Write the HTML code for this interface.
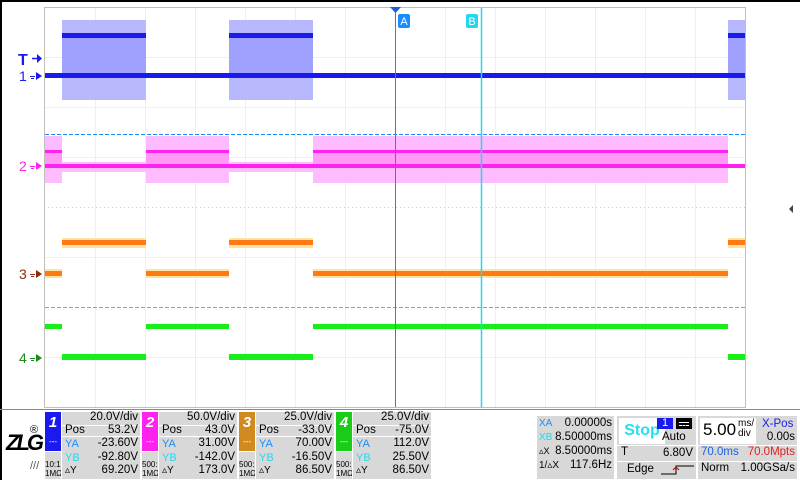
<!DOCTYPE html>
<html><head><meta charset="utf-8"><style>
body{margin:0;width:800px;height:480px;overflow:hidden;background:#fff;font-family:"Liberation Sans",sans-serif;position:relative}
.a{position:absolute}
.g{background:#d8d8d8}
.t{font-size:11.5px;color:#000;white-space:nowrap}
</style></head><body>
<div class="a" style="left:0;top:0;width:800px;height:2px;background:#000"></div>
<div class="a" style="left:0;top:0;width:2px;height:480px;background:#000"></div>
<svg class="a" style="left:0;top:0" width="800" height="410">
<g stroke="#efefef" stroke-width="1">
<line x1="95.5" y1="7" x2="95.5" y2="407"/><line x1="145.5" y1="7" x2="145.5" y2="407"/><line x1="195.5" y1="7" x2="195.5" y2="407"/><line x1="245.5" y1="7" x2="245.5" y2="407"/><line x1="295.5" y1="7" x2="295.5" y2="407"/><line x1="345.5" y1="7" x2="345.5" y2="407"/><line x1="445.5" y1="7" x2="445.5" y2="407"/><line x1="495.5" y1="7" x2="495.5" y2="407"/><line x1="545.5" y1="7" x2="545.5" y2="407"/><line x1="595.5" y1="7" x2="595.5" y2="407"/><line x1="645.5" y1="7" x2="645.5" y2="407"/><line x1="695.5" y1="7" x2="695.5" y2="407"/>
<line x1="44" y1="57.5" x2="745" y2="57.5"/><line x1="44" y1="107.5" x2="745" y2="107.5"/><line x1="44" y1="157.5" x2="745" y2="157.5"/><line x1="44" y1="257.5" x2="745" y2="257.5"/><line x1="44" y1="357.5" x2="745" y2="357.5"/>
</g>
<line x1="44" y1="207.5" x2="745" y2="207.5" stroke="#ccc" stroke-dasharray="1,3"/>
<line x1="44" y1="7.5" x2="746" y2="7.5" stroke="#c0c0b8"/>
<line x1="44.5" y1="7" x2="44.5" y2="408" stroke="#c0c0b8"/>
<line x1="745.5" y1="7" x2="745.5" y2="408" stroke="#c0c0b8"/>
<line x1="44" y1="407.5" x2="746" y2="407.5" stroke="#c0c0b8"/>
<!-- ch1 -->
<g fill="#b8b8ff"><rect x="62" y="20" width="84" height="80"/><rect x="229" y="20" width="84" height="80"/><rect x="728" y="20" width="17" height="80"/></g>
<g fill="#a0a0ff"><rect x="62" y="37" width="84" height="40"/><rect x="229" y="37" width="84" height="40"/><rect x="728" y="37" width="17" height="40"/></g>
<g fill="#1a1aee"><rect x="45" y="73" width="700" height="5"/><rect x="62" y="33" width="84" height="5"/><rect x="229" y="33" width="84" height="5"/><rect x="728" y="33" width="17" height="5"/></g>
<!-- ch2 -->
<line x1="45" y1="134.5" x2="745" y2="134.5" stroke="#1a8cff" stroke-dasharray="4,2"/>
<g fill="#ffbbff"><rect x="45" y="136" width="17" height="47"/><rect x="146" y="136" width="83" height="47"/><rect x="313" y="136" width="415" height="47"/></g>
<rect x="62" y="162" width="84" height="10" fill="#ffbbff"/><rect x="229" y="162" width="84" height="10" fill="#ffbbff"/>
<g fill="#ff99f5"><rect x="45" y="153" width="17" height="11"/><rect x="146" y="153" width="83" height="11"/><rect x="313" y="153" width="415" height="11"/></g>
<g fill="#ff22ee"><rect x="45" y="164" width="700" height="4"/><rect x="45" y="150" width="17" height="3"/><rect x="146" y="150" width="83" height="3"/><rect x="313" y="150" width="415" height="3"/></g>
<!-- ch3 -->
<g fill="#ffe3a0"><rect x="62" y="238" width="84" height="10"/><rect x="229" y="238" width="84" height="10"/><rect x="728" y="238" width="17" height="10"/><rect x="45" y="269" width="17" height="9"/><rect x="146" y="269" width="83" height="9"/><rect x="313" y="269" width="415" height="9"/></g>
<g fill="#ff7a14"><rect x="62" y="240" width="84" height="5"/><rect x="229" y="240" width="84" height="5"/><rect x="728" y="240" width="17" height="5"/><rect x="45" y="271" width="17" height="5"/><rect x="146" y="271" width="83" height="5"/><rect x="313" y="271" width="415" height="5"/></g>
<line x1="45" y1="307.5" x2="745" y2="307.5" stroke="#2ec8e6" stroke-dasharray="4,2"/>
<!-- ch4 -->
<g fill="#18ee18"><rect x="45" y="324" width="17" height="5"/><rect x="146" y="324" width="83" height="5"/><rect x="313" y="324" width="415" height="5"/><rect x="62" y="354" width="84" height="6"/><rect x="229" y="354" width="84" height="6"/><rect x="728" y="354" width="17" height="6"/></g>
<!-- cursors -->
<line x1="395.5" y1="8" x2="395.5" y2="407" stroke="#3a7be0"/>
<line x1="481.5" y1="8" x2="481.5" y2="407" stroke="#22d8f0" stroke-width="1.5"/>
<polygon points="390,7 401,7 395.5,13" fill="#1a5fe0"/>
<rect x="398" y="14" width="12" height="14" rx="2" fill="#1a8cff"/><text x="404" y="25" font-size="11" fill="#fff" text-anchor="middle" font-family="Liberation Sans">A</text>
<rect x="466" y="14" width="12" height="14" rx="2" fill="#22d8f0"/><text x="472" y="25" font-size="11" fill="#fff" text-anchor="middle" font-family="Liberation Sans">B</text>
<!-- left labels -->
<g font-family="Liberation Sans" font-size="14">
<text x="18" y="65" fill="#1a1aee" font-weight="bold" font-size="16">T</text><path d="M32 58.5H38" stroke="#1a1aee" stroke-width="1.5"/><polygon points="37,54 42,58.5 37,63" fill="#1a1aee"/>
<g fill="#1a1aee"><text x="19" y="81">1</text><rect x="30" y="76" width="5" height="1"/><rect x="31" y="78" width="3" height="1"/><polygon points="36,72 42,76 36,80"/></g>
<g fill="#ff22ee"><text x="19" y="171">2</text><rect x="30" y="166" width="5" height="1"/><rect x="31" y="168" width="3" height="1"/><polygon points="36,162 42,166 36,170"/></g>
<g fill="#8b2a0a"><text x="19" y="279">3</text><rect x="30" y="274" width="5" height="1"/><rect x="31" y="276" width="3" height="1"/><polygon points="36,270 42,274 36,278"/></g>
<g fill="#1a8a1a"><text x="19" y="363">4</text><rect x="30" y="358" width="5" height="1"/><rect x="31" y="360" width="3" height="1"/><polygon points="36,354 42,358 36,362"/></g>
</g>
<polygon points="793,205 789,209 793,213" fill="#444"/>
</svg>
<!-- bottom -->
<div class="a" style="left:0;top:409px;width:800px;height:1px;background:#888"></div>
<div class="a t" style="left:6px;top:430px;font-size:22px;font-weight:bold;font-style:italic;letter-spacing:-3px">ZLG</div>
<div class="a t" style="left:30px;top:424px;font-size:11px">®</div>
<div class="a t" style="left:30px;top:460px;font-size:11px;color:#555">///</div>
<div id="chs"></div>
<script>
var d=[["1","#1a1aee","20.0V/div","53.2V","-23.60V","-92.80V","69.20V","10:1"],["2","#ff22ee","50.0V/div","43.0V","31.00V","-142.0V","173.0V","500:1"],["3","#d08a20","25.0V/div","-33.0V","70.00V","-16.50V","86.50V","500:1"],["4","#18cc18","25.0V/div","-75.0V","112.0V","25.50V","86.50V","500:1"]];
var h="";d.forEach(function(c,i){var x=45+i*97;
h+='<div class="a" style="left:'+x+'px;top:412px;width:16px;height:22px;background:'+c[1]+';color:#fff;font-weight:bold;font-style:italic;font-size:15px;text-align:center;line-height:22px">'+c[0]+'</div>';
h+='<div class="a" style="left:'+x+'px;top:434px;width:16px;height:17px;background:'+c[1]+';color:#fff;font-size:8px;text-align:center;line-height:16px">---</div>';
h+='<div class="a g" style="left:'+x+'px;top:452px;width:16px;height:27px;font-size:8px;line-height:9px;padding-top:8px;box-sizing:border-box;overflow:hidden">'+c[7]+'<br>1MΩ</div>';
h+='<div class="a g" style="left:'+(x+17)+'px;top:412px;width:78px;height:67px"></div>';
h+='<div class="a t" style="left:'+(x+17)+'px;top:411px;width:76px;text-align:right">'+c[2]+'</div>';
h+='<div class="a" style="left:'+(x+17)+'px;top:425px;width:78px;height:1px;background:#fff"></div>';
h+='<div class="a" style="left:'+(x+17)+'px;top:436px;width:78px;height:1px;background:#fff"></div>';
h+='<div class="a t" style="left:'+(x+20)+'px;top:424px">Pos</div><div class="a t" style="left:'+(x+17)+'px;top:424px;width:76px;text-align:right">'+c[3]+'</div>';
h+='<div class="a t" style="left:'+(x+20)+'px;top:438px;color:#1a8cff;font-size:11px">YA</div><div class="a t" style="left:'+(x+17)+'px;top:437px;width:76px;text-align:right">'+c[4]+'</div>';
h+='<div class="a t" style="left:'+(x+20)+'px;top:452px;color:#22d8f0;font-size:11px">YB</div><div class="a t" style="left:'+(x+17)+'px;top:451px;width:76px;text-align:right">'+c[5]+'</div>';
h+='<div class="a t" style="left:'+(x+20)+'px;top:465px;font-size:10px">▵Y</div><div class="a t" style="left:'+(x+17)+'px;top:464px;width:76px;text-align:right">'+c[6]+'</div>';
});document.getElementById("chs").innerHTML=h;
</script>
<!-- cursor box -->
<div class="a g" style="left:537px;top:416px;width:77px;height:63px"></div>
<div class="a t" style="left:539px;top:418px;color:#1a8cff;font-size:10px">XA</div><div class="a t" style="left:537px;top:417px;width:75px;text-align:right">0.00000s</div>
<div class="a t" style="left:539px;top:432px;color:#22d8f0;font-size:10px">XB</div><div class="a t" style="left:537px;top:431px;width:75px;text-align:right">8.50000ms</div>
<div class="a t" style="left:539px;top:446px;font-size:9px">▵X</div><div class="a t" style="left:537px;top:445px;width:75px;text-align:right">8.50000ms</div>
<div class="a t" style="left:539px;top:460px;font-size:10px">1/▵X</div><div class="a t" style="left:537px;top:459px;width:75px;text-align:right">117.6Hz</div>
<!-- trigger -->
<div class="a g" style="left:617px;top:416px;width:79px;height:63px"></div>
<div class="a" style="left:619px;top:418px;width:46px;height:26px;background:#fff;color:#22e0f0;font-weight:bold;font-size:16px;line-height:26px;text-align:center">Stop</div>
<div class="a" style="left:657px;top:418px;width:16px;height:11px;background:#1a1aee;color:#fff;font-size:11px;line-height:11px;text-align:center">1</div>
<div class="a" style="left:676px;top:418px;width:16px;height:11px;background:#000"><div style="position:absolute;left:3px;top:4px;width:10px;height:1px;background:#fff"></div><div style="position:absolute;left:3px;top:7px;width:10px;height:1px;border-top:1px dashed #fff;box-sizing:border-box"></div></div>
<div class="a t" style="left:662px;top:431px">Auto</div>
<div class="a" style="left:617px;top:445px;width:79px;height:1px;background:#fff"></div>
<div class="a t" style="left:621px;top:446px">T</div><div class="a t" style="left:617px;top:447px;width:76px;text-align:right">6.80V</div>
<div class="a" style="left:617px;top:461px;width:79px;height:1px;background:#fff"></div>
<div class="a t" style="left:627px;top:463px">Edge</div>
<svg class="a" style="left:660px;top:462px" width="36" height="14"><path d="M1 12H16V4H34" stroke="#000" fill="none"/><path d="M13 8L16 5L19 8" stroke="#c00" fill="none"/></svg>
<!-- timebase -->
<div class="a g" style="left:698px;top:416px;width:99px;height:63px"></div>
<div class="a" style="left:700px;top:418px;width:56px;height:26px;background:#fff"></div>
<div class="a t" style="left:703px;top:420px;font-size:17px">5.00</div>
<div class="a t" style="left:738px;top:419px;font-size:10px;line-height:10px">ms/<br>div</div>
<div class="a t" style="left:762px;top:418px;color:#1a1aee">X-Pos</div>
<div class="a t" style="left:698px;top:431px;width:97px;text-align:right">0.00s</div>
<div class="a" style="left:698px;top:445px;width:99px;height:1px;background:#fff"></div>
<div class="a t" style="left:701px;top:446px;color:#1a5fe0">70.0ms</div>
<div class="a t" style="left:698px;top:446px;width:97px;text-align:right;color:#e02020">70.0Mpts</div>
<div class="a" style="left:698px;top:461px;width:99px;height:1px;background:#fff"></div>
<div class="a t" style="left:701px;top:462px">Norm</div>
<div class="a t" style="left:698px;top:462px;width:97px;text-align:right">1.00GSa/s</div>
</body></html>
